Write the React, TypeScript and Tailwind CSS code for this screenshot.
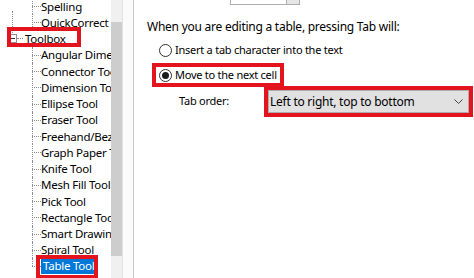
const children1 = ["Spelling", "QuickCorrect"];
const tools = [
  "Angular Dimension Tool",
  "Connector Tool",
  "Dimension Tool",
  "Ellipse Tool",
  "Eraser Tool",
  "Freehand/Bezier Tool",
  "Graph Paper Tool",
  "Knife Tool",
  "Mesh Fill Tool",
  "Pick Tool",
  "Rectangle Tool",
  "Smart Drawing Tool",
  "Spiral Tool",
];

function Branch({ last }: { last?: boolean }) {
  return (
    <div className="relative w-[9px] h-full ml-[32px] shrink-0">
      <div
        className={
          last
            ? "absolute left-0 top-0 h-1/2 border-l border-dotted border-[#8c8c8c]"
            : "absolute left-0 top-0 h-full border-l border-dotted border-[#8c8c8c]"
        }
      />
      <div className="absolute left-0 right-0 top-1/2 border-t border-dotted border-[#8c8c8c]" />
    </div>
  );
}

function TreeRow({ label }: { label: string }) {
  return (
    <div className="flex items-center h-[16.25px] whitespace-nowrap">
      <Branch />
      <span>{label}</span>
    </div>
  );
}

function Radio({ checked }: { checked?: boolean }) {
  return (
    <span className="w-[13px] h-[13px] rounded-full border border-[#333] bg-white flex items-center justify-center shrink-0">
      {checked && <span className="w-[7px] h-[7px] rounded-full bg-[#1a1a1a]" />}
    </span>
  );
}

export default function App() {
  return (
    <div className="w-[474px] h-[278px] overflow-hidden bg-white flex text-[11px] tracking-[-0.25px] font-['Noto_Sans',sans-serif] text-black">
      {/* tree */}
      <div className="w-[111px] h-full overflow-hidden shrink-0 text-[11.5px]">
        <div className="mt-[-2px]">
          {children1.map((c) => (
            <TreeRow key={c} label={c} />
          ))}
          <div className="relative flex items-center h-[16.25px] whitespace-nowrap">
            <div className="absolute left-[12px] top-[-20px] h-[22px] border-l border-dotted border-[#8c8c8c]" />
            <span className="ml-[8px] w-[9px] h-[9px] border border-[#919191] bg-white flex items-center justify-center shrink-0">
              <span className="w-[5px] h-px bg-[#333]" />
            </span>
            <span className="w-[6px] border-t border-dotted border-[#8c8c8c]" />
            <span className="ml-[2px]">Toolbox</span>
            <span className="absolute left-[7px] top-[-4px] w-[74px] h-[20px] border-4 border-[#e3141e]" />
          </div>
          {tools.map((t) => (
            <TreeRow key={t} label={t} />
          ))}
          <div className="relative flex items-center h-[16.25px] whitespace-nowrap">
            <Branch last />
            <span className="bg-[#0078d7] text-white px-[2px] leading-[16px]">Table Tool</span>
            <span className="absolute left-[36px] top-[-3px] w-[62px] h-[24px] border-4 border-[#e3141e]" />
          </div>
        </div>
      </div>
      {/* scrollbar */}
      <div className="w-[11px] h-full bg-[#f0f0f0] pt-[22px] shrink-0">
        <div className="h-[234px] bg-[#cdcdcd]" />
      </div>
      <div className="w-[12px] h-full border-l border-[#e3e3e3] border-r border-r-[#c8c8c8] bg-[#fbfbfb] shrink-0" />
      {/* options */}
      <div className="flex-1 h-full whitespace-nowrap">
        <div className="ml-[96px] w-[70px] h-[5px] border-x border-b border-[#adadad] bg-white flex justify-end">
          <div className="w-[13px] h-full border-l border-[#adadad] bg-[#e6e6e6]" />
        </div>
        <div className="ml-[13px] mt-[14px] leading-[16px] text-[12px]">When you are editing a table, pressing Tab will:</div>
        <div className="ml-[25px] mt-[7px] flex items-center gap-[3px] h-[16px]">
          <Radio />
          <span>Insert a tab character into the text</span>
        </div>
        <div className="ml-[18px] mt-[5px] w-[132px] h-[24px] border-4 border-[#e3141e] flex items-center pl-[3px] gap-[3px]">
          <Radio checked />
          <span>Move to the next cell</span>
        </div>
        <div className="flex items-center mt-[-1px] h-[31px]">
          <span className="ml-[45px] w-[85px]">Tab order:</span>
          <div className="w-[209px] h-[31px] border-4 border-[#e3141e]">
            <div className="h-full bg-[#e1e1e1] border border-[#adadad] flex items-center justify-between pl-[1px] pr-[5px] text-[12px]">
              <span>Left to right, top to bottom</span>
              <svg width="9" height="6" viewBox="0 0 9 6" fill="none">
                <path d="M0.5 0.5 L4.5 4.5 L8.5 0.5" stroke="#444" strokeWidth="1" />
              </svg>
            </div>
          </div>
        </div>
      </div>
    </div>
  );
}
